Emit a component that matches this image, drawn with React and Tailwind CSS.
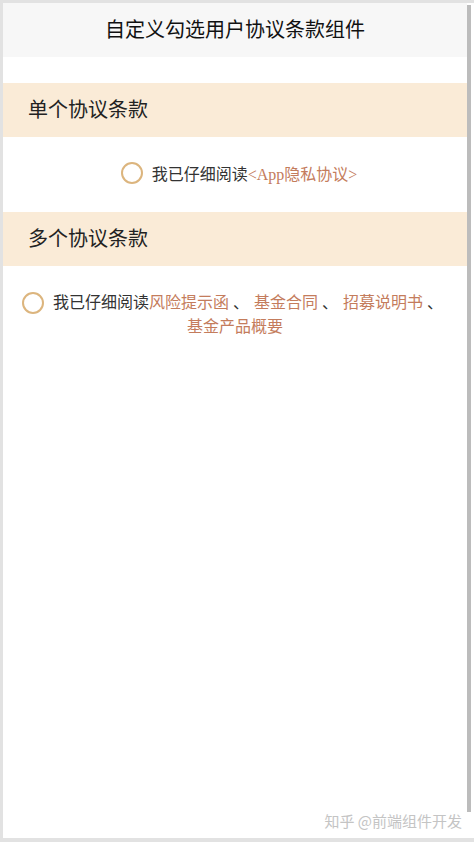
import React, { useState } from 'react';

const FONT = { fontFamily: '"Liberation Serif", "Noto Sans CJK SC", serif' };

function Circle({ checked, onClick }) {
  return (
    <span
      onClick={onClick}
      className="inline-block align-middle w-[22px] h-[22px] rounded-full border-2 border-[#dcb57e] mr-[9px] -mt-[3px] cursor-pointer"
    ></span>
  );
}

function SectionTitle({ children }) {
  return (
    <div className="h-[54px] bg-[#faebd7] flex items-center pl-[25px] text-[20px] text-[#222]">
      {children}
    </div>
  );
}

export default function App() {
  const [single, setSingle] = useState(false);
  const [multi, setMulti] = useState(false);
  const links = ['风险提示函', '基金合同', '招募说明书'];

  return (
    <div className="relative w-[474px] h-[842px] bg-[#e2e2e2] pt-[3px] pl-[3px] pb-[4px] flex overflow-hidden" style={FONT}>
      <div className="flex-1 bg-white flex flex-col">
        <div className="h-[54px] bg-[#f7f7f7] flex items-center justify-center text-[20px] text-[#111]">
          自定义勾选用户协议条款组件
        </div>
        <div className="h-[26px]"></div>
        <SectionTitle>单个协议条款</SectionTitle>
        <div className="h-[75px] flex items-center justify-center text-[16px] text-[#333] pl-[8px]">
          <Circle checked={single} onClick={() => setSingle(!single)} />
          <span>我已仔细阅读</span>
          <span className="text-[#c47c5c]">&lt;App隐私协议&gt;</span>
        </div>
        <SectionTitle>多个协议条款</SectionTitle>
        <div className="pt-[25px] px-[12px] text-center text-[16px] leading-[24px] text-[#333]">
          <span className="whitespace-nowrap">
            <Circle checked={multi} onClick={() => setMulti(!multi)} />
            我已仔细阅读
          </span>
          {links.map((l) => (
            <span key={l} className="whitespace-nowrap">
              <span className="text-[#c47c5c]">{l}</span>
              <span className="pl-[4px] pr-[5px]">、</span>
            </span>
          ))}
          <span className="text-[#c47c5c] whitespace-nowrap">基金产品概要</span>
        </div>
        <div className="flex-1"></div>
      </div>
      <div className="w-[5px] bg-white flex flex-col">
        <div className="h-[2px]"></div>
        <div className="w-[4px] h-[807px] bg-[#bcbcbc]"></div>
      </div>
      <div className="w-[2px] bg-white"></div>
      <div
        className="absolute right-[12px] bottom-[10px] text-[15px] text-[#c4c4c4]"
        style={{ fontFamily: '"Noto Sans CJK SC", sans-serif' }}
      >
        知乎 @前端组件开发
      </div>
    </div>
  );
}
